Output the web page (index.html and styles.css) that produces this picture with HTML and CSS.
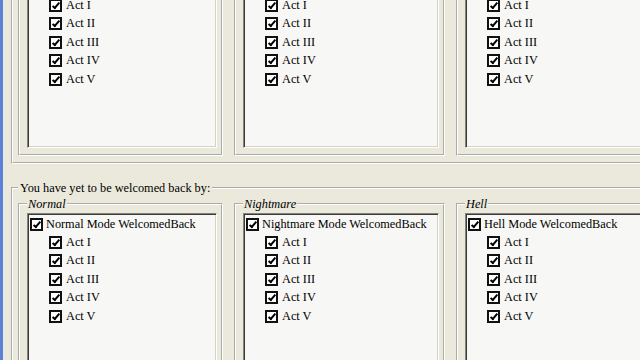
FILE: index.html
```html
<!DOCTYPE html>
<html lang="en">
<head>
    <meta charset="UTF-8">
    <meta name="viewport" content="width=device-width, initial-scale=1.0">
    <title>WelcomedBack Status</title>
    <link rel="stylesheet" href="styles.css">
</head>
<body>
    <div class="window">
        <fieldset class="section section-done">
            <legend>You have been welcomed back by:</legend>
            <div class="modes">
                <fieldset class="mode">
                    <legend>Normal</legend>
                    <div class="tree">
                        <div class="item parent"><span class="box"></span>Normal Mode WelcomedBack</div>
                        <div class="item act"><span class="box"></span>Act I</div>
                        <div class="item act"><span class="box"></span>Act II</div>
                        <div class="item act"><span class="box"></span>Act III</div>
                        <div class="item act"><span class="box"></span>Act IV</div>
                        <div class="item act"><span class="box"></span>Act V</div>
                    </div>
                </fieldset>
                <fieldset class="mode">
                    <legend>Nightmare</legend>
                    <div class="tree">
                        <div class="item parent"><span class="box"></span>Nightmare Mode WelcomedBack</div>
                        <div class="item act"><span class="box"></span>Act I</div>
                        <div class="item act"><span class="box"></span>Act II</div>
                        <div class="item act"><span class="box"></span>Act III</div>
                        <div class="item act"><span class="box"></span>Act IV</div>
                        <div class="item act"><span class="box"></span>Act V</div>
                    </div>
                </fieldset>
                <fieldset class="mode">
                    <legend>Hell</legend>
                    <div class="tree">
                        <div class="item parent"><span class="box"></span>Hell Mode WelcomedBack</div>
                        <div class="item act"><span class="box"></span>Act I</div>
                        <div class="item act"><span class="box"></span>Act II</div>
                        <div class="item act"><span class="box"></span>Act III</div>
                        <div class="item act"><span class="box"></span>Act IV</div>
                        <div class="item act"><span class="box"></span>Act V</div>
                    </div>
                </fieldset>
            </div>
        </fieldset>

        <fieldset class="section">
            <legend>You have yet to be welcomed back by:</legend>
            <div class="modes">
                <fieldset class="mode">
                    <legend>Normal</legend>
                    <div class="tree">
                        <div class="item parent"><span class="box"></span>Normal Mode WelcomedBack</div>
                        <div class="item act"><span class="box"></span>Act I</div>
                        <div class="item act"><span class="box"></span>Act II</div>
                        <div class="item act"><span class="box"></span>Act III</div>
                        <div class="item act"><span class="box"></span>Act IV</div>
                        <div class="item act"><span class="box"></span>Act V</div>
                    </div>
                </fieldset>
                <fieldset class="mode">
                    <legend>Nightmare</legend>
                    <div class="tree">
                        <div class="item parent"><span class="box"></span>Nightmare Mode WelcomedBack</div>
                        <div class="item act"><span class="box"></span>Act I</div>
                        <div class="item act"><span class="box"></span>Act II</div>
                        <div class="item act"><span class="box"></span>Act III</div>
                        <div class="item act"><span class="box"></span>Act IV</div>
                        <div class="item act"><span class="box"></span>Act V</div>
                    </div>
                </fieldset>
                <fieldset class="mode">
                    <legend>Hell</legend>
                    <div class="tree">
                        <div class="item parent"><span class="box"></span>Hell Mode WelcomedBack</div>
                        <div class="item act"><span class="box"></span>Act I</div>
                        <div class="item act"><span class="box"></span>Act II</div>
                        <div class="item act"><span class="box"></span>Act III</div>
                        <div class="item act"><span class="box"></span>Act IV</div>
                        <div class="item act"><span class="box"></span>Act V</div>
                    </div>
                </fieldset>
            </div>
        </fieldset>
    </div>
</body>
</html>
```

FILE: styles.css
```css
html, body {
    margin: 0;
    padding: 0;
    height: 100%;
    overflow: hidden;
}

body {
    font-family: "Liberation Serif", "Times New Roman", serif;
    font-size: 12.3px;
    color: #000000;
    background: #ebe9dc;
}

.window {
    display: flow-root;
    border-left: 3px solid #5b80d8;
    padding-left: 8px;
    height: 100%;
}

fieldset {
    margin: 0;
    min-width: 0;
    border: 2px groove #ffffff;
}

legend {
    padding: 0 2px;
    line-height: 14px;
}

.section {
    width: max-content;
    padding: 2px 5px 6px 5px;
}

.section-done {
    margin-top: -56px;
    margin-bottom: 17px;
}

.modes {
    display: grid;
    grid-template-columns: 205px 211px 211px;
    column-gap: 11px;
}

.mode {
    padding: 2px 4px 6px 7px;
}

.mode legend {
    font-style: italic;
    padding: 0 1px;
}

.tree {
    height: 172px;
    box-sizing: border-box;
    padding: 1px 2px;
    background: #f7f7f5;
    border: 1px solid;
    border-color: #858379 #ffffff #ffffff #858379;
    box-shadow: inset 1px 1px 0 #3a3a3a, inset -1px -1px 0 #d6d3c6;
}

.item {
    display: flex;
    align-items: center;
    gap: 3px;
    height: 18.4px;
    white-space: nowrap;
}

.act {
    margin-left: 19px;
    gap: 4px;
}

.box {
    position: relative;
    flex: none;
    width: 13px;
    height: 13px;
    box-sizing: border-box;
    border: 2px solid #111111;
    background: #ffffff;
}

.box::after {
    content: "";
    position: absolute;
    left: 3px;
    top: 0;
    width: 2px;
    height: 6px;
    border: solid #000000;
    border-width: 0 2px 2px 0;
    transform: rotate(40deg);
}
```
